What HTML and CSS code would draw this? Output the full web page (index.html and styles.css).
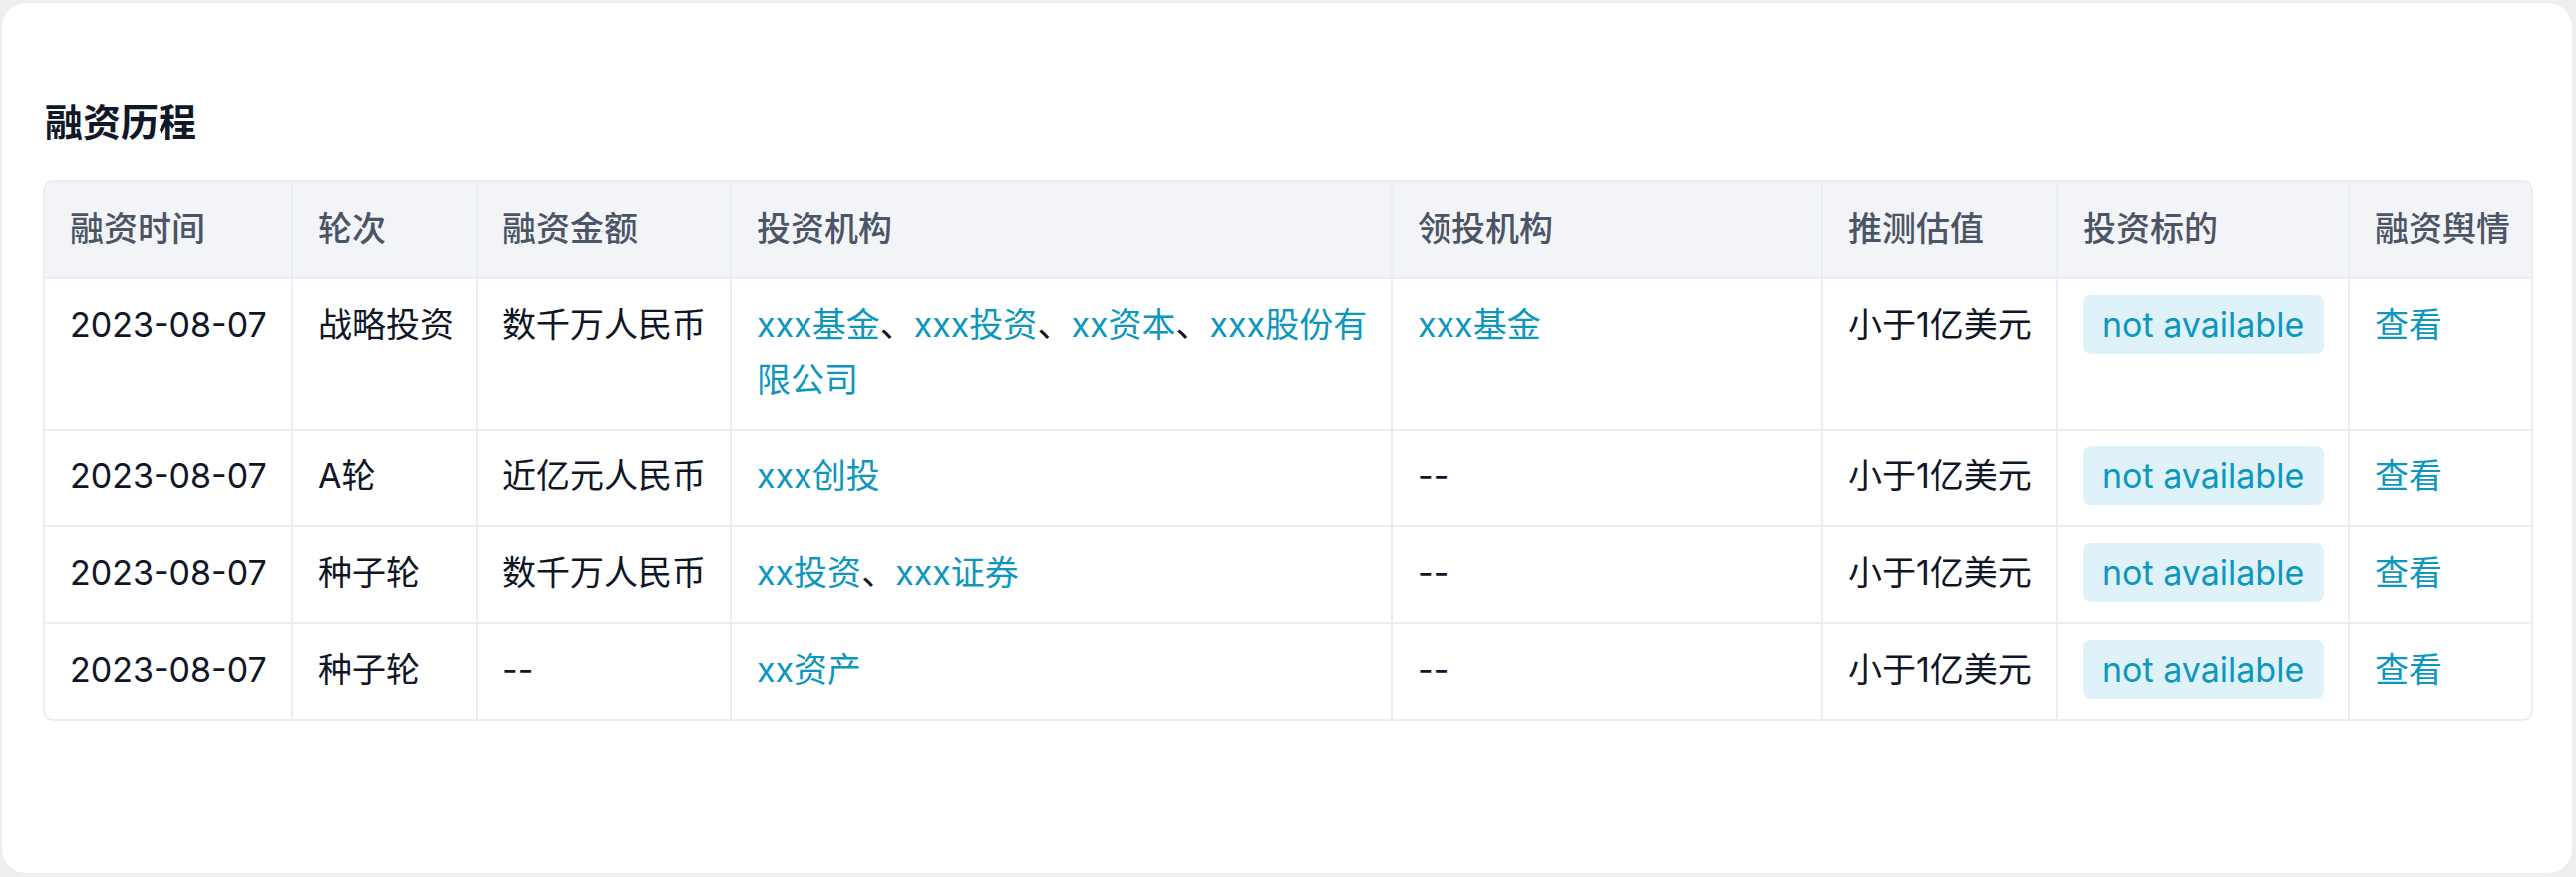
FILE: index.html
```html
<!DOCTYPE html>
<html lang="zh-CN">
<head>
<meta charset="utf-8">
<title>融资历程</title>
<link rel="stylesheet" href="styles.css">
</head>
<body>
<div class="card">
  <h2 class="title">融资历程</h2>
  <table class="fin-table">
    <colgroup>
      <col class="c1"><col class="c2"><col class="c3"><col class="c4"><col class="c5"><col class="c6"><col class="c7"><col class="c8">
    </colgroup>
    <thead>
      <tr>
        <th>融资时间</th><th>轮次</th><th>融资金额</th><th>投资机构</th><th>领投机构</th><th>推测估值</th><th>投资标的</th><th>融资舆情</th>
      </tr>
    </thead>
    <tbody>
      <tr>
        <td>2023-08-07</td>
        <td>战略投资</td>
        <td>数千万人民币</td>
        <td class="wrap"><a class="link">xxx基金</a>、<a class="link">xxx投资</a>、<a class="link">xx资本</a>、<a class="link">xxx股份有限公司</a></td>
        <td class="wrap"><a class="link">xxx基金</a></td>
        <td>小于1亿美元</td>
        <td><span class="badge">not available</span></td>
        <td><a class="link">查看</a></td>
      </tr>
      <tr>
        <td>2023-08-07</td>
        <td>A轮</td>
        <td>近亿元人民币</td>
        <td class="wrap"><a class="link">xxx创投</a></td>
        <td class="wrap">--</td>
        <td>小于1亿美元</td>
        <td><span class="badge">not available</span></td>
        <td><a class="link">查看</a></td>
      </tr>
      <tr>
        <td>2023-08-07</td>
        <td>种子轮</td>
        <td>数千万人民币</td>
        <td class="wrap"><a class="link">xx投资</a>、<a class="link">xxx证券</a></td>
        <td class="wrap">--</td>
        <td>小于1亿美元</td>
        <td><span class="badge">not available</span></td>
        <td><a class="link">查看</a></td>
      </tr>
      <tr>
        <td>2023-08-07</td>
        <td>种子轮</td>
        <td>--</td>
        <td class="wrap"><a class="link">xx资产</a></td>
        <td class="wrap">--</td>
        <td>小于1亿美元</td>
        <td><span class="badge">not available</span></td>
        <td><a class="link">查看</a></td>
      </tr>
    </tbody>
  </table>
</div>
</body>
</html>
```
FILE: styles.css
```css
html, body {
  margin: 0;
  padding: 0;
}
body {
  background: #eeeeef;
  font-family: "Inter", "Noto Sans CJK SC", sans-serif;
  width: 2584px;
  height: 880px;
  overflow: hidden;
}
.card {
  box-sizing: border-box;
  margin: 3px 4px 0 2px;
  height: 873px;
  background: #ffffff;
  border-radius: 24px;
  padding: 91px 39px 0 41px;
}
.title {
  margin: 0 0 31px 2px;
  font-size: 38px;
  line-height: 56px;
  font-weight: 600;
  color: #111827;
}
.fin-table {
  width: 2498px;
  table-layout: fixed;
  border-collapse: separate;
  border-spacing: 0;
  border: 2px solid #eaedf4;
  border-radius: 10px;
  overflow: hidden;
  font-size: 34px;
  line-height: 55px;
  color: #0f1626;
}
.c1 { width: 249px; }
.c2 { width: 185px; }
.c3 { width: 255px; }
.c4 { width: 663px; }
.c5 { width: 432px; }
.c6 { width: 235px; }
.c7 { width: 293px; }
.c8 { width: 182px; }
.fin-table th,
.fin-table td {
  padding: 18px 16px 22px 25px;
  text-align: left;
  vertical-align: top;
  white-space: nowrap;
  border-right: 2px solid #eaedf4;
  border-bottom: 2px solid #eaedf4;
}
.fin-table td.wrap {
  white-space: normal;
  padding-right: 8px;
}
.fin-table th:last-child,
.fin-table td:last-child {
  border-right: none;
}
.fin-table tbody tr:last-child td {
  border-bottom: none;
}
.fin-table th {
  background: #f3f4f8;
  color: #4b5565;
  font-weight: 500;
  padding-top: 19px;
  padding-bottom: 21px;
}
.link {
  color: #0e97bd;
  text-decoration: none;
}
.badge {
  display: inline-block;
  margin: -2px 0;
  padding: 2px 20px;
  line-height: 55px;
  background: #dff2f9;
  color: #0e97bd;
  border-radius: 8px;
}
```
